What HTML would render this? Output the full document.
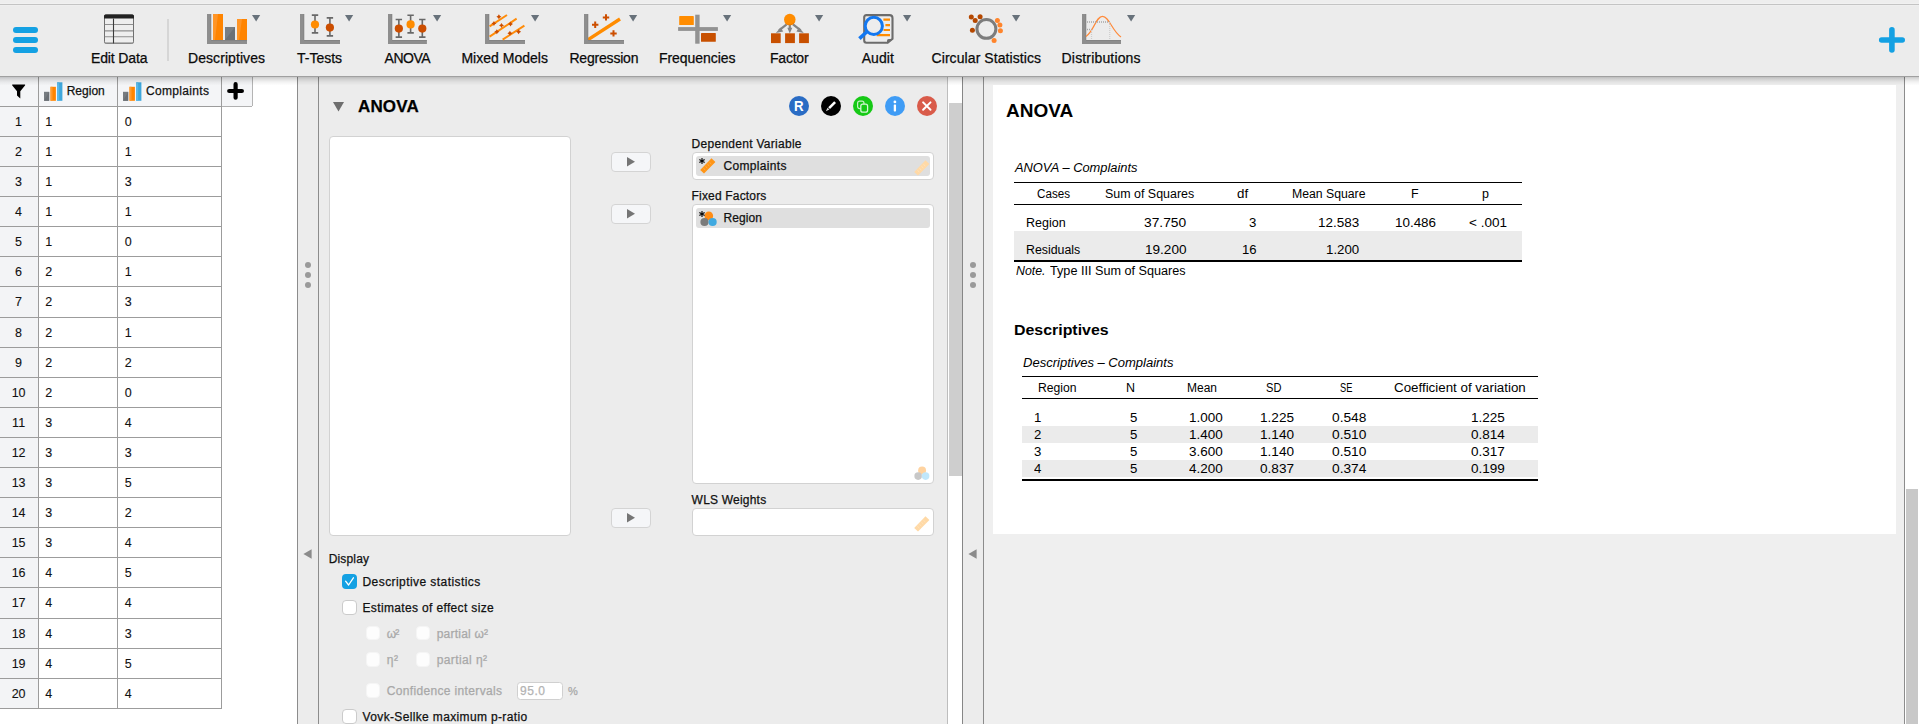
<!DOCTYPE html>
<html><head><meta charset="utf-8"><title>JASP</title>
<style>
html,body{margin:0;padding:0;}
body{width:1919px;height:724px;overflow:hidden;position:relative;background:#ececec;font-family:"Liberation Sans",sans-serif;}
.a{position:absolute;}
.t{position:absolute;white-space:pre;line-height:1;transform-origin:0 0;}
svg{position:absolute;overflow:visible;}
</style></head>
<body>
<div class="a" style="left:0px;top:77px;width:297px;height:647px;background:#fff;"></div>
<div class="a" style="left:984px;top:77px;width:920px;height:647px;background:#efefef;"></div>
<div class="a" style="left:993px;top:85px;width:903px;height:448.6px;background:#fff;"></div>
<div class="a" style="left:1904px;top:77px;width:15px;height:647px;background:#fff;"></div>
<div class="a" style="left:1903.6px;top:77px;width:1.2px;height:647px;background:#8c8c8c;"></div>
<div class="a" style="left:1906.2px;top:489px;width:11.8px;height:235px;background:#c8c8c8;"></div>
<div class="a" style="left:948px;top:77px;width:14px;height:647px;background:#fff;"></div>
<div class="a" style="left:947px;top:77px;width:1px;height:647px;background:#bdbdbd;"></div>
<div class="a" style="left:949px;top:103px;width:12.6px;height:373px;background:#cecece;"></div>
<div class="a" style="left:297px;top:77px;width:1px;height:647px;background:#8c8c8c;"></div>
<div class="a" style="left:318px;top:77px;width:1px;height:647px;background:#8c8c8c;"></div>
<div class="a" style="left:983px;top:77px;width:1px;height:647px;background:#8c8c8c;"></div>
<div class="a" style="left:961.8px;top:77px;width:1.4px;height:647px;background:#868686;"></div>
<div class="a" style="left:304.55px;top:261.95px;width:6.5px;height:6.5px;background:#9a9a9a;border-radius:50%;"></div>
<div class="a" style="left:304.55px;top:271.95px;width:6.5px;height:6.5px;background:#9a9a9a;border-radius:50%;"></div>
<div class="a" style="left:304.55px;top:281.95px;width:6.5px;height:6.5px;background:#9a9a9a;border-radius:50%;"></div>
<svg style="left:303.40000000000003px;top:549.1px" width="9" height="10" viewBox="0 0 9 10"><path d="M8.6 0.3 L0.4 5 L8.6 9.7 Z" fill="#8b8b8b"/></svg>
<div class="a" style="left:969.55px;top:261.95px;width:6.5px;height:6.5px;background:#9a9a9a;border-radius:50%;"></div>
<div class="a" style="left:969.55px;top:271.95px;width:6.5px;height:6.5px;background:#9a9a9a;border-radius:50%;"></div>
<div class="a" style="left:969.55px;top:281.95px;width:6.5px;height:6.5px;background:#9a9a9a;border-radius:50%;"></div>
<svg style="left:968.4px;top:549.1px" width="9" height="10" viewBox="0 0 9 10"><path d="M8.6 0.3 L0.4 5 L8.6 9.7 Z" fill="#8b8b8b"/></svg>
<div class="a" style="left:0px;top:77px;width:252px;height:29px;background:#f4f5f7;"></div>
<div class="a" style="left:0px;top:106px;width:38px;height:603px;background:#f3f4f6;"></div>
<div class="a" style="left:38px;top:77px;width:1px;height:632px;background:#9c9c9c;"></div>
<div class="a" style="left:117px;top:77px;width:1px;height:632px;background:#9c9c9c;"></div>
<div class="a" style="left:221px;top:77px;width:1px;height:632px;background:#9c9c9c;"></div>
<div class="a" style="left:252px;top:77px;width:1px;height:29px;background:#b4b4b4;"></div>
<div class="a" style="left:222px;top:106px;width:30px;height:1px;background:#b0b0b0;"></div>
<div class="a" style="left:0px;top:106px;width:222px;height:1px;background:#9c9c9c;"></div>
<div class="a" style="left:0px;top:136px;width:222px;height:1px;background:#9c9c9c;"></div>
<div class="a" style="left:0px;top:166px;width:222px;height:1px;background:#9c9c9c;"></div>
<div class="a" style="left:0px;top:196px;width:222px;height:1px;background:#9c9c9c;"></div>
<div class="a" style="left:0px;top:226px;width:222px;height:1px;background:#9c9c9c;"></div>
<div class="a" style="left:0px;top:256px;width:222px;height:1px;background:#9c9c9c;"></div>
<div class="a" style="left:0px;top:286px;width:222px;height:1px;background:#9c9c9c;"></div>
<div class="a" style="left:0px;top:317px;width:222px;height:1px;background:#9c9c9c;"></div>
<div class="a" style="left:0px;top:347px;width:222px;height:1px;background:#9c9c9c;"></div>
<div class="a" style="left:0px;top:377px;width:222px;height:1px;background:#9c9c9c;"></div>
<div class="a" style="left:0px;top:407px;width:222px;height:1px;background:#9c9c9c;"></div>
<div class="a" style="left:0px;top:437px;width:222px;height:1px;background:#9c9c9c;"></div>
<div class="a" style="left:0px;top:467px;width:222px;height:1px;background:#9c9c9c;"></div>
<div class="a" style="left:0px;top:497px;width:222px;height:1px;background:#9c9c9c;"></div>
<div class="a" style="left:0px;top:527px;width:222px;height:1px;background:#9c9c9c;"></div>
<div class="a" style="left:0px;top:557px;width:222px;height:1px;background:#9c9c9c;"></div>
<div class="a" style="left:0px;top:587px;width:222px;height:1px;background:#9c9c9c;"></div>
<div class="a" style="left:0px;top:618px;width:222px;height:1px;background:#9c9c9c;"></div>
<div class="a" style="left:0px;top:648px;width:222px;height:1px;background:#9c9c9c;"></div>
<div class="a" style="left:0px;top:678px;width:222px;height:1px;background:#9c9c9c;"></div>
<div class="a" style="left:0px;top:708px;width:222px;height:1px;background:#9c9c9c;"></div>
<svg style="left:12px;top:84px" width="13.5" height="15" viewBox="0 0 13.5 15"><path d="M0.3 0.4 H13 Q13.4 0.9 13 1.4 L8.3 7.2 V14.6 L5 11.6 V7.2 L0.3 1.4 Q-0.1 0.9 0.3 0.4 Z" fill="#000"/></svg>
<svg style="left:43.8px;top:82px" width="18.5" height="19" viewBox="0 0 18.5 19"><rect x="0" y="9.8" width="5.2" height="9" fill="#767b80"/><path d="M0 18.8 L5.2 9.8 V18.8Z" fill="#6a6f74"/><rect x="6.5" y="4.8" width="5.4" height="14" fill="#ff8500"/><rect x="6.5" y="4.8" width="2" height="14" fill="#ff9a2e"/><rect x="13.2" y="0.3" width="5.2" height="18.5" fill="#3fa7dc"/><rect x="13.2" y="0.3" width="2" height="18.5" fill="#5cb8e6"/></svg>
<svg style="left:122.8px;top:82px" width="18.5" height="19" viewBox="0 0 18.5 19"><rect x="0" y="9.8" width="5.2" height="9" fill="#767b80"/><path d="M0 18.8 L5.2 9.8 V18.8Z" fill="#6a6f74"/><rect x="6.5" y="4.8" width="5.4" height="14" fill="#ff8500"/><rect x="6.5" y="4.8" width="2" height="14" fill="#ff9a2e"/><rect x="13.2" y="0.3" width="5.2" height="18.5" fill="#3fa7dc"/><rect x="13.2" y="0.3" width="2" height="18.5" fill="#5cb8e6"/></svg>
<svg style="left:227px;top:82px" width="17.5" height="17.5" viewBox="0 0 17.5 17.5"><path d="M8.6 2.2 V15.7 M2.2 9 H14.9" stroke="#000" stroke-width="4.2" stroke-linecap="round" fill="none"/></svg>
<div class="a" style="left:0px;top:0px;width:1919px;height:4px;background:#eeeeee;"></div>
<div class="a" style="left:0px;top:3px;width:1919px;height:1px;background:#f1f1f1;"></div>
<div class="a" style="left:0px;top:5px;width:1919px;height:1px;background:#efefef;"></div>
<div class="a" style="left:0px;top:4px;width:1919px;height:1px;background:#c4c4c4;"></div>
<div class="a" style="left:0px;top:76px;width:1919px;height:10px;background:linear-gradient(#989898 0px,#a8a8a8 1px,rgba(0,0,0,0.2) 1.2px,rgba(0,0,0,0.13) 3px,rgba(0,0,0,0.05) 6px,rgba(0,0,0,0) 9.5px);"></div>
<div class="a" style="left:13.2px;top:27.25px;width:25.2px;height:5.5px;background:#14a1e3;border-radius:3px;"></div>
<div class="a" style="left:13.2px;top:37.25px;width:25.2px;height:5.5px;background:#14a1e3;border-radius:3px;"></div>
<div class="a" style="left:13.2px;top:47.25px;width:25.2px;height:5.5px;background:#14a1e3;border-radius:3px;"></div>
<svg style="left:1872px;top:21px" width="40" height="40" viewBox="0 0 40 40"><path d="M19.9 8.9 V29 M9.7 19 H30.2" stroke="#14a1e3" stroke-width="5.6" stroke-linecap="round" fill="none"/></svg>
<div class="a" style="left:167px;top:19px;width:1.5px;height:42px;background:#d6d6d6;"></div>
<svg style="left:252.2px;top:14.8px" width="8.2" height="6.4" viewBox="0 0 8.2 6.4"><path d="M0 0 H8.2 L4.1 6.4 Z" fill="#68727b"/></svg>
<svg style="left:345.2px;top:14.8px" width="8.2" height="6.4" viewBox="0 0 8.2 6.4"><path d="M0 0 H8.2 L4.1 6.4 Z" fill="#68727b"/></svg>
<svg style="left:432.9px;top:14.8px" width="8.2" height="6.4" viewBox="0 0 8.2 6.4"><path d="M0 0 H8.2 L4.1 6.4 Z" fill="#68727b"/></svg>
<svg style="left:530.6px;top:14.8px" width="8.2" height="6.4" viewBox="0 0 8.2 6.4"><path d="M0 0 H8.2 L4.1 6.4 Z" fill="#68727b"/></svg>
<svg style="left:629px;top:14.8px" width="8.2" height="6.4" viewBox="0 0 8.2 6.4"><path d="M0 0 H8.2 L4.1 6.4 Z" fill="#68727b"/></svg>
<svg style="left:723px;top:14.8px" width="8.2" height="6.4" viewBox="0 0 8.2 6.4"><path d="M0 0 H8.2 L4.1 6.4 Z" fill="#68727b"/></svg>
<svg style="left:815.2px;top:14.8px" width="8.2" height="6.4" viewBox="0 0 8.2 6.4"><path d="M0 0 H8.2 L4.1 6.4 Z" fill="#68727b"/></svg>
<svg style="left:902.9px;top:14.8px" width="8.2" height="6.4" viewBox="0 0 8.2 6.4"><path d="M0 0 H8.2 L4.1 6.4 Z" fill="#68727b"/></svg>
<svg style="left:1011.6px;top:14.8px" width="8.2" height="6.4" viewBox="0 0 8.2 6.4"><path d="M0 0 H8.2 L4.1 6.4 Z" fill="#68727b"/></svg>
<svg style="left:1126.9px;top:14.8px" width="8.2" height="6.4" viewBox="0 0 8.2 6.4"><path d="M0 0 H8.2 L4.1 6.4 Z" fill="#68727b"/></svg>
<svg style="left:104px;top:14px" width="30" height="30" viewBox="0 0 30 30"><rect x="0.5" y="0.8" width="29" height="28.6" rx="1.6" fill="#eeeeee" stroke="#707070" stroke-width="1"/><path d="M0.5 28.9 H29.5" stroke="#9a9a9a" stroke-width="1"/><path d="M0 2 Q0 0.4 1.6 0.4 H28.4 Q30 0.4 30 2 V4.5 H0Z" fill="#222"/><path d="M0.8 10.5 H29.2 M0.8 16.9 H29.2 M0.8 22.8 H29.2" stroke="#8f8f8f" stroke-width="1.1"/><path d="M9.5 4.5 V29.4" stroke="#3c3c3c" stroke-width="1.1"/></svg>
<svg style="left:207px;top:14px" width="40" height="30" viewBox="0 0 40 30"><path d="M0 0 H4.2 V26 H40 V30 H0 Z" fill="#8e8e8e"/><path d="M4.2 26 H40 V27 H4.2Z M3.4 0 H4.2 V26 H3.4Z" fill="#777" opacity=".5"/><rect x="6" y="0" width="10" height="26" fill="#ff8400"/><path d="M6 0 H11 L8 26 H6Z" fill="#ff9526"/><rect x="18" y="13" width="10" height="13" fill="#6b7177"/><path d="M18 13 H28 L18 26Z" fill="#787e84"/><rect x="30" y="5" width="10" height="21" fill="#ff8400"/><path d="M30 5 H35 L32 26 H30Z" fill="#ff9526"/></svg>
<svg style="left:300px;top:14px" width="40" height="30" viewBox="0 0 40 30"><path d="M0 0 H4.2 V26 H40 V30 H0 Z" fill="#8e8e8e"/><path d="M4.2 26 H40 V27 H4.2Z M3.4 0 H4.2 V26 H3.4Z" fill="#777" opacity=".5"/><path d="M15 1.1 V18.9 M11.8 1.1 H18.2 M11.8 18.9 H18.2" stroke="#686868" stroke-width="1.6" fill="none"/><circle cx="15" cy="10.5" r="4.1" fill="#ff8c00"/><path d="M29.9 3.9 V21.9 M26.7 3.9 H33.1 M26.7 21.9 H33.1" stroke="#686868" stroke-width="1.6" fill="none"/><circle cx="29.9" cy="13.6" r="4.1" fill="#cc4e00"/></svg>
<svg style="left:388px;top:14px" width="40" height="30" viewBox="0 0 40 30"><path d="M0 0 H4.2 V26 H38.9 V30 H0 Z" fill="#8e8e8e"/><path d="M4.2 26 H38.9 V27 H4.2Z M3.4 0 H4.2 V26 H3.4Z" fill="#777" opacity=".5"/><path d="M10.85 5.5 V23.1 M7.6499999999999995 5.5 H14.05 M7.6499999999999995 23.1 H14.05" stroke="#686868" stroke-width="1.6" fill="none"/><circle cx="10.85" cy="14.6" r="4.1" fill="#cc4e00"/><path d="M22.6 1.3 V18.9 M19.400000000000002 1.3 H25.8 M19.400000000000002 18.9 H25.8" stroke="#686868" stroke-width="1.6" fill="none"/><circle cx="22.6" cy="10.4" r="4.1" fill="#ff8c00"/><path d="M34.3 5.5 V23.1 M31.099999999999998 5.5 H37.5 M31.099999999999998 23.1 H37.5" stroke="#686868" stroke-width="1.6" fill="none"/><circle cx="34.3" cy="14.6" r="4.1" fill="#cc4e00"/></svg>
<svg style="left:485px;top:14px" width="40" height="30" viewBox="0 0 40 30"><path d="M0 0 H4.2 V26 H40 V30 H0 Z" fill="#8e8e8e"/><path d="M4.2 26 H40 V27 H4.2Z M3.4 0 H4.2 V26 H3.4Z" fill="#777" opacity=".5"/><path d="M4.6 12.3 L22 1 M4.6 22.7 L31.6 4.7 M17.65 25.6 L39.4 11.7" stroke="#ff8c0a" stroke-width="2" fill="none"/><path d="M13.90 0.20 L14.85 1.75 L16.40 2.70 L14.85 3.65 L13.90 5.20 L12.95 3.65 L11.40 2.70 L12.95 1.75Z" fill="#cc4e00"/><path d="M8.95 6.90 L9.90 8.45 L11.45 9.40 L9.90 10.35 L8.95 11.90 L8.00 10.35 L6.45 9.40 L8.00 8.45Z" fill="#cc4e00"/><path d="M16.50 8.90 L17.45 10.45 L19.00 11.40 L17.45 12.35 L16.50 13.90 L15.55 12.35 L14.00 11.40 L15.55 10.45Z" fill="#cc4e00"/><path d="M25.50 7.45 L26.45 9.00 L28.00 9.95 L26.45 10.90 L25.50 12.45 L24.55 10.90 L23.00 9.95 L24.55 9.00Z" fill="#cc4e00"/><path d="M11.85 15.30 L12.80 16.85 L14.35 17.80 L12.80 18.75 L11.85 20.30 L10.90 18.75 L9.35 17.80 L10.90 16.85Z" fill="#cc4e00"/><path d="M24.90 16.70 L25.85 18.25 L27.40 19.20 L25.85 20.15 L24.90 21.70 L23.95 20.15 L22.40 19.20 L23.95 18.25Z" fill="#cc4e00"/><path d="M33.60 15.30 L34.55 16.85 L36.10 17.80 L34.55 18.75 L33.60 20.30 L32.65 18.75 L31.10 17.80 L32.65 16.85Z" fill="#cc4e00"/></svg>
<svg style="left:584px;top:14px" width="40" height="30" viewBox="0 0 40 30"><path d="M3 26.4 L36 5" stroke="#ff8c00" stroke-width="3.4" fill="none"/><path d="M0 0 H4.2 V26 H40 V30 H0 Z" fill="#8e8e8e"/><path d="M4.2 26 H40 V27 H4.2Z M3.4 0 H4.2 V26 H3.4Z" fill="#777" opacity=".5"/><path d="M18.8 3.4 H25.2 M22 0.19999999999999973 V6.6" stroke="#cc4e00" stroke-width="2"/><path d="M7.999999999999999 10.8 H14.399999999999999 M11.2 7.6000000000000005 V14.0" stroke="#cc4e00" stroke-width="2"/><path d="M26.3 19.4 H32.7 M29.5 16.2 V22.599999999999998" stroke="#cc4e00" stroke-width="2"/></svg>
<svg style="left:678px;top:14px" width="40" height="30" viewBox="0 0 40 30"><rect x="17.2" y="0.7" width="4.4" height="29" fill="#929292"/><rect x="0.1" y="13.1" width="39.8" height="3.8" fill="#929292"/><rect x="1.2" y="2.1" width="14.6" height="9" rx="0.6" fill="#ff8c00"/><rect x="23" y="18.9" width="14.8" height="8.9" rx="0.6" fill="#c85000"/></svg>
<svg style="left:770px;top:14px" width="40" height="30" viewBox="0 0 40 30"><path d="M19.8 9 V15.5 M16.65 10.3 L9 16.4 M23 10.3 L30.7 16.4" stroke="#848484" stroke-width="2.2" fill="none"/><path d="M17.3 13.8 H22.3 L19.8 19.4Z M10.6 13.4 L5.8 19.1 L13.2 17.5Z M29 13.4 L33.8 19.1 L26.4 17.5Z" fill="#848484"/><circle cx="19.8" cy="5.6" r="5.75" fill="#ff8c00"/><path d="M14.6 8 A5.75 5.75 0 0 0 25.4 6.6 A6.4 6.4 0 0 1 14.6 8Z" fill="#e87800" opacity=".8"/><rect x="1" y="19.3" width="9.7" height="9.8" fill="#c85000"/><rect x="15.1" y="19.3" width="9.8" height="9.8" fill="#c85000"/><rect x="29.1" y="19.3" width="9.8" height="9.8" fill="#c85000"/></svg>
<svg style="left:859px;top:14px" width="36" height="30" viewBox="0 0 36 30"><path d="M7.4 1.1 H30.6 Q33.5 1.1 33.5 4 V24.8 L28.7 28.8 H7.4 Q5.2 28.8 5.2 26.6 V3.3 Q5.2 1.1 7.4 1.1Z" fill="#ededed" stroke="#6c6c6c" stroke-width="2.1"/><path d="M28 29.4 V26.6 Q28 25 29.6 25 H34.2 Z" fill="#6c6c6c"/><path d="M24.4 5.7 H31 M26.4 11.1 H31 M24.6 16 H31 M17.7 21.1 H31" stroke="#ff8c00" stroke-width="2.2"/><circle cx="14.8" cy="11.9" r="8.6" fill="#ededed" stroke="#1478f0" stroke-width="3"/><path d="M7.6 18 L0.4 24.6" stroke="#1478f0" stroke-width="3.6" stroke-linecap="butt"/></svg>
<svg style="left:970px;top:14px" width="40" height="30" viewBox="0 0 40 30"><circle cx="16.4" cy="14.9" r="9.45" fill="none" stroke="#7c7c7c" stroke-width="3"/><circle cx="1.3" cy="3.0" r="2.5" fill="#b54800"/><circle cx="10.1" cy="2.7" r="2.5" fill="#b54800"/><circle cx="5.2" cy="6.4" r="2.5" fill="#b54800"/><circle cx="2.4" cy="16.2" r="2.5" fill="#b54800"/><circle cx="27.4" cy="6.5" r="2.5" fill="#ff842b"/><circle cx="29.9" cy="11.1" r="2.5" fill="#ff842b"/><circle cx="30.4" cy="16.7" r="2.5" fill="#ff842b"/><circle cx="24.1" cy="26.5" r="2.5" fill="#ff842b"/></svg>
<svg style="left:1082px;top:14px" width="40" height="30" viewBox="0 0 40 30"><path d="M0 0 H4.2 V26 H39 V30 H0 Z" fill="#8e8e8e"/><path d="M4.2 26 H39 V27 H4.2Z M3.4 0 H4.2 V26 H3.4Z" fill="#777" opacity=".5"/><path d="M4 22.5 C12 17 14 2.3 20.5 2.3 C27 2.3 30 17 39 23" stroke="#ff8a3a" stroke-width="1.2" fill="none"/><path d="M5 8 H28 M5 15.5 H9.5" stroke="#a6a6a6" stroke-width="1.4" stroke-dasharray="1 1" fill="none"/><path d="M9.5 16 V26 M27.7 8 V26" stroke="#cdcdcd" stroke-width="1.2" stroke-dasharray="1 1" fill="none"/></svg>
<svg style="left:333px;top:102px" width="11" height="9.6" viewBox="0 0 11 9.6"><path d="M0 0 H11 L5.5 9.6Z" fill="#6e6e6e"/></svg>
<svg style="left:789px;top:96px" width="20" height="20" viewBox="0 0 20 20"><circle cx="10" cy="10" r="10" fill="#2a6cc4"/><text x="5.1" y="15.3" font-family="Liberation Sans" font-weight="bold" font-size="15.3" fill="#fff" textLength="9.6" lengthAdjust="spacingAndGlyphs">R</text></svg>
<svg style="left:821px;top:96px" width="20" height="20" viewBox="0 0 20 20"><circle cx="10" cy="10" r="10" fill="#000"/><path d="M7.2 11.2 L13.2 5.2 L15 7 L9 13 Z" fill="#fff"/><path d="M6.6 11.8 L8.4 13.6 L4.8 15.2 Z" fill="#d8d8d8"/></svg>
<svg style="left:853px;top:96px" width="20" height="20" viewBox="0 0 20 20"><circle cx="10" cy="10" r="10" fill="#16c916"/><rect x="4.6" y="5.2" width="6.4" height="7.4" rx="2" fill="none" stroke="#c4f2c4" stroke-width="1.2"/><rect x="7.8" y="8.2" width="6.8" height="8" rx="2" fill="#16c916" stroke="#d4f6d4" stroke-width="1.3"/></svg>
<svg style="left:885px;top:96px" width="20" height="20" viewBox="0 0 20 20"><circle cx="10" cy="10" r="10" fill="#3f9cf5"/><rect x="8.75" y="8.4" width="2.3" height="7" rx="0.7" fill="#fff"/><circle cx="9.9" cy="5.9" r="1.4" fill="#fff"/></svg>
<svg style="left:917px;top:96px" width="20" height="20" viewBox="0 0 20 20"><circle cx="10" cy="10" r="10" fill="#d95b4a"/><path d="M6.1 6.4 L13.5 13.8 M13.5 6.4 L6.1 13.8" stroke="#fff" stroke-width="2" stroke-linecap="round"/></svg>
<div class="a" style="left:329px;top:136px;width:242px;height:400px;background:#fff;border:1px solid #d2d2d2;border-radius:4px;box-sizing:border-box;"></div>
<div class="a" style="left:692px;top:152px;width:242px;height:28px;background:#fff;border:1px solid #d2d2d2;border-radius:4px;box-sizing:border-box;"></div>
<div class="a" style="left:692px;top:204px;width:242px;height:280px;background:#fff;border:1px solid #d2d2d2;border-radius:4px;box-sizing:border-box;"></div>
<div class="a" style="left:692px;top:508px;width:242px;height:28px;background:#fff;border:1px solid #d2d2d2;border-radius:4px;box-sizing:border-box;"></div>
<div class="a" style="left:696px;top:156px;width:234px;height:20px;background:#dfdfdf;border-radius:3px;"></div>
<div class="a" style="left:696px;top:208px;width:234px;height:20px;background:#dfdfdf;border-radius:3px;"></div>
<div class="a" style="left:611px;top:152px;width:40px;height:20px;background:#f5f6f8;border:1px solid #d4d4d4;border-radius:4px;box-sizing:border-box;"></div>
<svg style="left:627px;top:157.3px" width="8" height="9.4" viewBox="0 0 8 9.4"><path d="M0 0 L8 4.7 L0 9.4Z" fill="#757575"/></svg>
<div class="a" style="left:611px;top:204px;width:40px;height:20px;background:#f5f6f8;border:1px solid #d4d4d4;border-radius:4px;box-sizing:border-box;"></div>
<svg style="left:627px;top:209.3px" width="8" height="9.4" viewBox="0 0 8 9.4"><path d="M0 0 L8 4.7 L0 9.4Z" fill="#757575"/></svg>
<div class="a" style="left:611px;top:508px;width:40px;height:20px;background:#f5f6f8;border:1px solid #d4d4d4;border-radius:4px;box-sizing:border-box;"></div>
<svg style="left:627px;top:513.3px" width="8" height="9.4" viewBox="0 0 8 9.4"><path d="M0 0 L8 4.7 L0 9.4Z" fill="#757575"/></svg>
<svg style="left:700px;top:158px" width="16" height="16" viewBox="0 0 16 16"><path d="M0.2 11.9 L11.5 0.3 L15.4 3.9 L4 15.5 Z" fill="#ff9516"/><path d="M3.4 10.2 l1.9 1.8 M5.4 8.2 l1.9 1.8 M7.4 6.2 l1.9 1.8 M9.4 4.2 l1.9 1.8" stroke="#ffb75e" stroke-width="0.7"/></svg>
<svg style="left:699.2px;top:158.4px" width="6" height="6" viewBox="0 0 6 6"><path d="M3 -0.1 V6.1 M0.35 1.5 L5.65 4.5 M5.65 1.5 L0.35 4.5" stroke="#0a0a0a" stroke-width="1.15"/><circle cx="3" cy="3" r="1.1" fill="#0a0a0a"/></svg>
<svg style="left:914.2px;top:516px" width="16" height="16" viewBox="0 0 16 16"><path d="M0.2 11.9 L11.5 0.3 L15.4 3.9 L4 15.5 Z" fill="#ffd9a6"/><path d="M3.4 10.2 l1.9 1.8 M5.4 8.2 l1.9 1.8 M7.4 6.2 l1.9 1.8 M9.4 4.2 l1.9 1.8" stroke="#ffe6c4" stroke-width="0.7"/></svg>
<svg style="left:914.2px;top:160px" width="16" height="16" viewBox="0 0 16 16"><path d="M0.2 11.9 L11.5 0.3 L15.4 3.9 L4 15.5 Z" fill="#ffd9a6"/><path d="M3.4 10.2 l1.9 1.8 M5.4 8.2 l1.9 1.8 M7.4 6.2 l1.9 1.8 M9.4 4.2 l1.9 1.8" stroke="#ffe6c4" stroke-width="0.7"/></svg>
<svg style="left:699.5px;top:210.7px" width="16" height="16" viewBox="0 0 16 16"><g transform="scale(1)"><circle cx="8.8" cy="4.9" r="4.3" fill="#ff8c14"/><circle cx="4.5" cy="11" r="4.1" fill="#7b7b7b"/><circle cx="12.6" cy="11" r="4.1" fill="#3fa9e0"/></g></svg>
<svg style="left:699.2px;top:210.6px" width="6" height="6" viewBox="0 0 6 6"><path d="M3 -0.1 V6.1 M0.35 1.5 L5.65 4.5 M5.65 1.5 L0.35 4.5" stroke="#0a0a0a" stroke-width="1.15"/><circle cx="3" cy="3" r="1.1" fill="#0a0a0a"/></svg>
<svg style="left:914.06px;top:465.8px" width="16" height="16" viewBox="0 0 16 16"><g transform="scale(0.92)"><circle cx="8.8" cy="4.9" r="4.3" fill="#ffd3a0"/><circle cx="4.5" cy="11" r="4.1" fill="#c8c8c8"/><circle cx="12.6" cy="11" r="4.1" fill="#c0e7fb"/></g></svg>
<div class="a" style="left:342px;top:574px;width:15px;height:15px;background:#14a1e3;border-radius:4px;"></div>
<svg style="left:342px;top:574px" width="15" height="15" viewBox="0 0 15 15"><path d="M3.6 7.2 L6.6 11 L11.4 3.8" stroke="#fff" stroke-width="1.3" fill="none" stroke-linecap="round" stroke-linejoin="round"/></svg>
<div class="a" style="left:342px;top:600px;width:15px;height:14.8px;background:#fff;border:1px solid #cbcbcb;border-radius:4px;box-sizing:border-box;"></div>
<div class="a" style="left:342px;top:709px;width:15px;height:15px;background:#fff;border:1px solid #cbcbcb;border-radius:4px;box-sizing:border-box;"></div>
<div class="a" style="left:366px;top:626px;width:14.4px;height:14.4px;background:#fdfdfd;border:1px solid #f5f5f5;border-radius:4px;box-sizing:border-box;"></div>
<div class="a" style="left:366px;top:652.3px;width:14.4px;height:14.4px;background:#fdfdfd;border:1px solid #f5f5f5;border-radius:4px;box-sizing:border-box;"></div>
<div class="a" style="left:366px;top:683.3px;width:14.4px;height:14.4px;background:#fdfdfd;border:1px solid #f5f5f5;border-radius:4px;box-sizing:border-box;"></div>
<div class="a" style="left:415.8px;top:626px;width:14.4px;height:14.4px;background:#fdfdfd;border:1px solid #f5f5f5;border-radius:4px;box-sizing:border-box;"></div>
<div class="a" style="left:415.8px;top:652.3px;width:14.4px;height:14.4px;background:#fdfdfd;border:1px solid #f5f5f5;border-radius:4px;box-sizing:border-box;"></div>
<div class="a" style="left:517px;top:681.5px;width:45.5px;height:18px;background:#fff;border:1px solid #d0d0d0;border-radius:3.5px;box-sizing:border-box;"></div>
<div class="a" style="left:1014px;top:182px;width:508px;height:1px;background:#000;"></div>
<div class="a" style="left:1014px;top:204px;width:508px;height:1px;background:#000;"></div>
<div class="a" style="left:1014px;top:231px;width:508px;height:29px;background:#ebebeb;"></div>
<div class="a" style="left:1014px;top:260px;width:508px;height:2px;background:#000;"></div>
<div class="a" style="left:1022px;top:376px;width:516px;height:1px;background:#000;"></div>
<div class="a" style="left:1022px;top:398px;width:516px;height:1px;background:#000;"></div>
<div class="a" style="left:1022px;top:426px;width:516px;height:17px;background:#ebebeb;"></div>
<div class="a" style="left:1022px;top:460px;width:516px;height:17px;background:#ebebeb;"></div>
<div class="a" style="left:1022px;top:479px;width:516px;height:2px;background:#000;"></div>
<span class="t" style="left:66.70px;top:85px;font-size:12px;color:#111;letter-spacing:0.01px;-webkit-text-stroke:0.25px;">Region</span>
<span class="t" style="left:146.10px;top:85px;font-size:12px;color:#111;letter-spacing:0.31px;-webkit-text-stroke:0.25px;">Complaints</span>
<span class="t" style="left:15.12px;top:116px;font-size:12.5px;color:#111;-webkit-text-stroke:0.1px;">1</span>
<span class="t" style="left:45.20px;top:116px;font-size:12.5px;color:#111;-webkit-text-stroke:0.1px;">1</span>
<span class="t" style="left:124.80px;top:116px;font-size:12.5px;color:#111;-webkit-text-stroke:0.1px;">0</span>
<span class="t" style="left:15.12px;top:146px;font-size:12.5px;color:#111;-webkit-text-stroke:0.1px;">2</span>
<span class="t" style="left:45.20px;top:146px;font-size:12.5px;color:#111;-webkit-text-stroke:0.1px;">1</span>
<span class="t" style="left:124.80px;top:146px;font-size:12.5px;color:#111;-webkit-text-stroke:0.1px;">1</span>
<span class="t" style="left:15.12px;top:176px;font-size:12.5px;color:#111;-webkit-text-stroke:0.1px;">3</span>
<span class="t" style="left:45.20px;top:176px;font-size:12.5px;color:#111;-webkit-text-stroke:0.1px;">1</span>
<span class="t" style="left:124.80px;top:176px;font-size:12.5px;color:#111;-webkit-text-stroke:0.1px;">3</span>
<span class="t" style="left:15.12px;top:206px;font-size:12.5px;color:#111;-webkit-text-stroke:0.1px;">4</span>
<span class="t" style="left:45.20px;top:206px;font-size:12.5px;color:#111;-webkit-text-stroke:0.1px;">1</span>
<span class="t" style="left:124.80px;top:206px;font-size:12.5px;color:#111;-webkit-text-stroke:0.1px;">1</span>
<span class="t" style="left:15.12px;top:236px;font-size:12.5px;color:#111;-webkit-text-stroke:0.1px;">5</span>
<span class="t" style="left:45.20px;top:236px;font-size:12.5px;color:#111;-webkit-text-stroke:0.1px;">1</span>
<span class="t" style="left:124.80px;top:236px;font-size:12.5px;color:#111;-webkit-text-stroke:0.1px;">0</span>
<span class="t" style="left:15.12px;top:266px;font-size:12.5px;color:#111;-webkit-text-stroke:0.1px;">6</span>
<span class="t" style="left:45.20px;top:266px;font-size:12.5px;color:#111;-webkit-text-stroke:0.1px;">2</span>
<span class="t" style="left:124.80px;top:266px;font-size:12.5px;color:#111;-webkit-text-stroke:0.1px;">1</span>
<span class="t" style="left:15.12px;top:296px;font-size:12.5px;color:#111;-webkit-text-stroke:0.1px;">7</span>
<span class="t" style="left:45.20px;top:296px;font-size:12.5px;color:#111;-webkit-text-stroke:0.1px;">2</span>
<span class="t" style="left:124.80px;top:296px;font-size:12.5px;color:#111;-webkit-text-stroke:0.1px;">3</span>
<span class="t" style="left:15.12px;top:327px;font-size:12.5px;color:#111;-webkit-text-stroke:0.1px;">8</span>
<span class="t" style="left:45.20px;top:327px;font-size:12.5px;color:#111;-webkit-text-stroke:0.1px;">2</span>
<span class="t" style="left:124.80px;top:327px;font-size:12.5px;color:#111;-webkit-text-stroke:0.1px;">1</span>
<span class="t" style="left:15.12px;top:357px;font-size:12.5px;color:#111;-webkit-text-stroke:0.1px;">9</span>
<span class="t" style="left:45.20px;top:357px;font-size:12.5px;color:#111;-webkit-text-stroke:0.1px;">2</span>
<span class="t" style="left:124.80px;top:357px;font-size:12.5px;color:#111;-webkit-text-stroke:0.1px;">2</span>
<span class="t" style="left:11.65px;top:387px;font-size:12.5px;color:#111;-webkit-text-stroke:0.1px;">10</span>
<span class="t" style="left:45.20px;top:387px;font-size:12.5px;color:#111;-webkit-text-stroke:0.1px;">2</span>
<span class="t" style="left:124.80px;top:387px;font-size:12.5px;color:#111;-webkit-text-stroke:0.1px;">0</span>
<span class="t" style="left:12.11px;top:417px;font-size:12.5px;color:#111;-webkit-text-stroke:0.1px;">11</span>
<span class="t" style="left:45.20px;top:417px;font-size:12.5px;color:#111;-webkit-text-stroke:0.1px;">3</span>
<span class="t" style="left:124.80px;top:417px;font-size:12.5px;color:#111;-webkit-text-stroke:0.1px;">4</span>
<span class="t" style="left:11.65px;top:447px;font-size:12.5px;color:#111;-webkit-text-stroke:0.1px;">12</span>
<span class="t" style="left:45.20px;top:447px;font-size:12.5px;color:#111;-webkit-text-stroke:0.1px;">3</span>
<span class="t" style="left:124.80px;top:447px;font-size:12.5px;color:#111;-webkit-text-stroke:0.1px;">3</span>
<span class="t" style="left:11.65px;top:477px;font-size:12.5px;color:#111;-webkit-text-stroke:0.1px;">13</span>
<span class="t" style="left:45.20px;top:477px;font-size:12.5px;color:#111;-webkit-text-stroke:0.1px;">3</span>
<span class="t" style="left:124.80px;top:477px;font-size:12.5px;color:#111;-webkit-text-stroke:0.1px;">5</span>
<span class="t" style="left:11.65px;top:507px;font-size:12.5px;color:#111;-webkit-text-stroke:0.1px;">14</span>
<span class="t" style="left:45.20px;top:507px;font-size:12.5px;color:#111;-webkit-text-stroke:0.1px;">3</span>
<span class="t" style="left:124.80px;top:507px;font-size:12.5px;color:#111;-webkit-text-stroke:0.1px;">2</span>
<span class="t" style="left:11.65px;top:537px;font-size:12.5px;color:#111;-webkit-text-stroke:0.1px;">15</span>
<span class="t" style="left:45.20px;top:537px;font-size:12.5px;color:#111;-webkit-text-stroke:0.1px;">3</span>
<span class="t" style="left:124.80px;top:537px;font-size:12.5px;color:#111;-webkit-text-stroke:0.1px;">4</span>
<span class="t" style="left:11.65px;top:567px;font-size:12.5px;color:#111;-webkit-text-stroke:0.1px;">16</span>
<span class="t" style="left:45.20px;top:567px;font-size:12.5px;color:#111;-webkit-text-stroke:0.1px;">4</span>
<span class="t" style="left:124.80px;top:567px;font-size:12.5px;color:#111;-webkit-text-stroke:0.1px;">5</span>
<span class="t" style="left:11.65px;top:597px;font-size:12.5px;color:#111;-webkit-text-stroke:0.1px;">17</span>
<span class="t" style="left:45.20px;top:597px;font-size:12.5px;color:#111;-webkit-text-stroke:0.1px;">4</span>
<span class="t" style="left:124.80px;top:597px;font-size:12.5px;color:#111;-webkit-text-stroke:0.1px;">4</span>
<span class="t" style="left:11.65px;top:628px;font-size:12.5px;color:#111;-webkit-text-stroke:0.1px;">18</span>
<span class="t" style="left:45.20px;top:628px;font-size:12.5px;color:#111;-webkit-text-stroke:0.1px;">4</span>
<span class="t" style="left:124.80px;top:628px;font-size:12.5px;color:#111;-webkit-text-stroke:0.1px;">3</span>
<span class="t" style="left:11.65px;top:658px;font-size:12.5px;color:#111;-webkit-text-stroke:0.1px;">19</span>
<span class="t" style="left:45.20px;top:658px;font-size:12.5px;color:#111;-webkit-text-stroke:0.1px;">4</span>
<span class="t" style="left:124.80px;top:658px;font-size:12.5px;color:#111;-webkit-text-stroke:0.1px;">5</span>
<span class="t" style="left:11.65px;top:688px;font-size:12.5px;color:#111;-webkit-text-stroke:0.1px;">20</span>
<span class="t" style="left:45.20px;top:688px;font-size:12.5px;color:#111;-webkit-text-stroke:0.1px;">4</span>
<span class="t" style="left:124.80px;top:688px;font-size:12.5px;color:#111;-webkit-text-stroke:0.1px;">4</span>
<span class="t" style="left:91.00px;top:51px;font-size:14px;color:#0a0a0a;letter-spacing:-0.14px;-webkit-text-stroke:0.25px;">Edit Data</span>
<span class="t" style="left:188.00px;top:51px;font-size:14px;color:#0a0a0a;letter-spacing:0.07px;-webkit-text-stroke:0.25px;">Descriptives</span>
<span class="t" style="left:297.00px;top:51px;font-size:14px;color:#0a0a0a;letter-spacing:-0.02px;-webkit-text-stroke:0.25px;">T-Tests</span>
<span class="t" style="left:384.50px;top:51px;font-size:14px;color:#0a0a0a;letter-spacing:-0.45px;-webkit-text-stroke:0.25px;">ANOVA</span>
<span class="t" style="left:461.40px;top:51px;font-size:14px;color:#0a0a0a;letter-spacing:0.02px;-webkit-text-stroke:0.25px;">Mixed Models</span>
<span class="t" style="left:569.40px;top:51px;font-size:14px;color:#0a0a0a;letter-spacing:-0.19px;-webkit-text-stroke:0.25px;">Regression</span>
<span class="t" style="left:659.00px;top:51px;font-size:14px;color:#0a0a0a;letter-spacing:-0.06px;-webkit-text-stroke:0.25px;">Frequencies</span>
<span class="t" style="left:770.00px;top:51px;font-size:14px;color:#0a0a0a;letter-spacing:-0.22px;-webkit-text-stroke:0.25px;">Factor</span>
<span class="t" style="left:861.70px;top:51px;font-size:14px;color:#0a0a0a;letter-spacing:0.09px;-webkit-text-stroke:0.25px;">Audit</span>
<span class="t" style="left:931.50px;top:51px;font-size:14px;color:#0a0a0a;letter-spacing:0.08px;-webkit-text-stroke:0.25px;">Circular Statistics</span>
<span class="t" style="left:1061.60px;top:51px;font-size:14px;color:#0a0a0a;letter-spacing:0.16px;-webkit-text-stroke:0.25px;">Distributions</span>
<span class="t" style="left:357.90px;top:98px;font-size:17px;font-weight:bold;letter-spacing:0.21px;-webkit-text-stroke:0.25px;">ANOVA</span>
<span class="t" style="left:691.60px;top:138px;font-size:12px;color:#111;letter-spacing:0.28px;-webkit-text-stroke:0.25px;">Dependent Variable</span>
<span class="t" style="left:723.50px;top:160px;font-size:12px;color:#111;letter-spacing:0.33px;-webkit-text-stroke:0.25px;">Complaints</span>
<span class="t" style="left:691.60px;top:190px;font-size:12px;color:#111;letter-spacing:0.17px;-webkit-text-stroke:0.25px;">Fixed Factors</span>
<span class="t" style="left:723.50px;top:212px;font-size:12px;color:#111;letter-spacing:0.09px;-webkit-text-stroke:0.25px;">Region</span>
<span class="t" style="left:691.60px;top:494px;font-size:12px;color:#111;letter-spacing:0.21px;-webkit-text-stroke:0.25px;">WLS Weights</span>
<span class="t" style="left:328.70px;top:553px;font-size:12px;color:#111;letter-spacing:0.16px;-webkit-text-stroke:0.25px;">Display</span>
<span class="t" style="left:362.50px;top:576px;font-size:12px;color:#111;letter-spacing:0.43px;-webkit-text-stroke:0.25px;">Descriptive statistics</span>
<span class="t" style="left:362.50px;top:602px;font-size:12px;color:#111;letter-spacing:0.35px;-webkit-text-stroke:0.25px;">Estimates of effect size</span>
<span class="t" style="left:386.70px;top:628px;font-size:12px;color:#a8a8a8;letter-spacing:-0.88px;-webkit-text-stroke:0.25px;">ω²</span>
<span class="t" style="left:436.70px;top:628px;font-size:12px;color:#a8a8a8;letter-spacing:0.22px;-webkit-text-stroke:0.25px;">partial ω²</span>
<span class="t" style="left:386.70px;top:654px;font-size:12px;color:#a8a8a8;letter-spacing:0.63px;-webkit-text-stroke:0.25px;">η²</span>
<span class="t" style="left:436.70px;top:654px;font-size:12px;color:#a8a8a8;letter-spacing:0.4px;-webkit-text-stroke:0.25px;">partial η²</span>
<span class="t" style="left:386.70px;top:685px;font-size:12px;color:#a8a8a8;letter-spacing:0.35px;-webkit-text-stroke:0.25px;">Confidence intervals</span>
<span class="t" style="left:519.90px;top:685px;font-size:12px;color:#b3b3b3;letter-spacing:0.58px;-webkit-text-stroke:0.25px;">95.0</span>
<span class="t" style="left:568.00px;top:686px;font-size:11px;color:#a8a8a8;-webkit-text-stroke:0.25px;">%</span>
<span class="t" style="left:362.60px;top:711px;font-size:12px;color:#111;letter-spacing:0.35px;-webkit-text-stroke:0.25px;">Vovk-Sellke maximum p-ratio</span>
<span class="t" style="left:1005.70px;top:103px;font-size:17.5px;font-weight:bold;transform:scaleX(1.0855);">ANOVA</span>
<span class="t" style="left:1014.50px;top:162px;font-size:12px;font-style:italic;transform:scaleX(1.0719);">ANOVA – Complaints</span>
<span class="t" style="left:1036.50px;top:188px;font-size:12px;transform:scaleX(0.9701);">Cases</span>
<span class="t" style="left:1105.00px;top:188px;font-size:12px;transform:scaleX(1.0366);">Sum of Squares</span>
<span class="t" style="left:1237.40px;top:188px;font-size:12px;transform:scaleX(1.1083);">df</span>
<span class="t" style="left:1291.50px;top:188px;font-size:12px;transform:scaleX(1.0202);">Mean Square</span>
<span class="t" style="left:1410.70px;top:188px;font-size:12px;transform:scaleX(1.04);">F</span>
<span class="t" style="left:1482.40px;top:188px;font-size:12px;transform:scaleX(1.04);">p</span>
<span class="t" style="left:1025.70px;top:217px;font-size:12px;transform:scaleX(1.0439);">Region</span>
<span class="t" style="left:1143.80px;top:217px;font-size:12px;transform:scaleX(1.1498);">37.750</span>
<span class="t" style="left:1248.90px;top:217px;font-size:12px;transform:scaleX(1.1);">3</span>
<span class="t" style="left:1317.50px;top:217px;font-size:12px;transform:scaleX(1.1225);">12.583</span>
<span class="t" style="left:1394.80px;top:217px;font-size:12px;transform:scaleX(1.1171);">10.486</span>
<span class="t" style="left:1469.40px;top:217px;font-size:12px;transform:scaleX(1.1275);">&lt; .001</span>
<span class="t" style="left:1025.70px;top:244px;font-size:12px;transform:scaleX(1.0303);">Residuals</span>
<span class="t" style="left:1144.50px;top:244px;font-size:12px;transform:scaleX(1.1307);">19.200</span>
<span class="t" style="left:1241.60px;top:244px;font-size:12px;transform:scaleX(1.0929);">16</span>
<span class="t" style="left:1325.50px;top:244px;font-size:12px;transform:scaleX(1.1055);">1.200</span>
<span class="t" style="left:1015.50px;top:265px;font-size:12px;font-style:italic;transform:scaleX(1.0283);">Note.</span>
<span class="t" style="left:1049.50px;top:265px;font-size:12px;transform:scaleX(1.0541);">Type III Sum of Squares</span>
<span class="t" style="left:1014.10px;top:322px;font-size:15px;font-weight:bold;transform:scaleX(1.0603);">Descriptives</span>
<span class="t" style="left:1022.70px;top:357px;font-size:12px;font-style:italic;transform:scaleX(1.0849);">Descriptives – Complaints</span>
<span class="t" style="left:1038.40px;top:382px;font-size:12px;transform:scaleX(1.015);">Region</span>
<span class="t" style="left:1125.80px;top:382px;font-size:12px;transform:scaleX(1.04);">N</span>
<span class="t" style="left:1186.70px;top:382px;font-size:12px;transform:scaleX(0.999);">Mean</span>
<span class="t" style="left:1266.00px;top:382px;font-size:12px;transform:scaleX(0.9237);">SD</span>
<span class="t" style="left:1339.60px;top:382px;font-size:12px;transform:scaleX(0.7742);">SE</span>
<span class="t" style="left:1394.00px;top:382px;font-size:12px;transform:scaleX(1.1121);">Coefficient of variation</span>
<span class="t" style="left:1033.60px;top:412px;font-size:12px;transform:scaleX(1.1);">1</span>
<span class="t" style="left:1130.40px;top:412px;font-size:12px;transform:scaleX(1.1);">5</span>
<span class="t" style="left:1188.70px;top:412px;font-size:12px;transform:scaleX(1.1222);">1.000</span>
<span class="t" style="left:1260.20px;top:412px;font-size:12px;transform:scaleX(1.1322);">1.225</span>
<span class="t" style="left:1331.90px;top:412px;font-size:12px;transform:scaleX(1.1455);">0.548</span>
<span class="t" style="left:1471.40px;top:412px;font-size:12px;transform:scaleX(1.1255);">1.225</span>
<span class="t" style="left:1033.60px;top:429px;font-size:12px;transform:scaleX(1.1);">2</span>
<span class="t" style="left:1130.40px;top:429px;font-size:12px;transform:scaleX(1.1);">5</span>
<span class="t" style="left:1188.70px;top:429px;font-size:12px;transform:scaleX(1.1222);">1.400</span>
<span class="t" style="left:1260.20px;top:429px;font-size:12px;transform:scaleX(1.1322);">1.140</span>
<span class="t" style="left:1331.90px;top:429px;font-size:12px;transform:scaleX(1.1455);">0.510</span>
<span class="t" style="left:1471.40px;top:429px;font-size:12px;transform:scaleX(1.1255);">0.814</span>
<span class="t" style="left:1033.60px;top:446px;font-size:12px;transform:scaleX(1.1);">3</span>
<span class="t" style="left:1130.40px;top:446px;font-size:12px;transform:scaleX(1.1);">5</span>
<span class="t" style="left:1188.70px;top:446px;font-size:12px;transform:scaleX(1.1222);">3.600</span>
<span class="t" style="left:1260.20px;top:446px;font-size:12px;transform:scaleX(1.1322);">1.140</span>
<span class="t" style="left:1331.90px;top:446px;font-size:12px;transform:scaleX(1.1455);">0.510</span>
<span class="t" style="left:1471.40px;top:446px;font-size:12px;transform:scaleX(1.1255);">0.317</span>
<span class="t" style="left:1033.60px;top:463px;font-size:12px;transform:scaleX(1.1);">4</span>
<span class="t" style="left:1130.40px;top:463px;font-size:12px;transform:scaleX(1.1);">5</span>
<span class="t" style="left:1188.70px;top:463px;font-size:12px;transform:scaleX(1.1222);">4.200</span>
<span class="t" style="left:1260.20px;top:463px;font-size:12px;transform:scaleX(1.1322);">0.837</span>
<span class="t" style="left:1331.90px;top:463px;font-size:12px;transform:scaleX(1.1455);">0.374</span>
<span class="t" style="left:1471.40px;top:463px;font-size:12px;transform:scaleX(1.1255);">0.199</span>
</body></html>
